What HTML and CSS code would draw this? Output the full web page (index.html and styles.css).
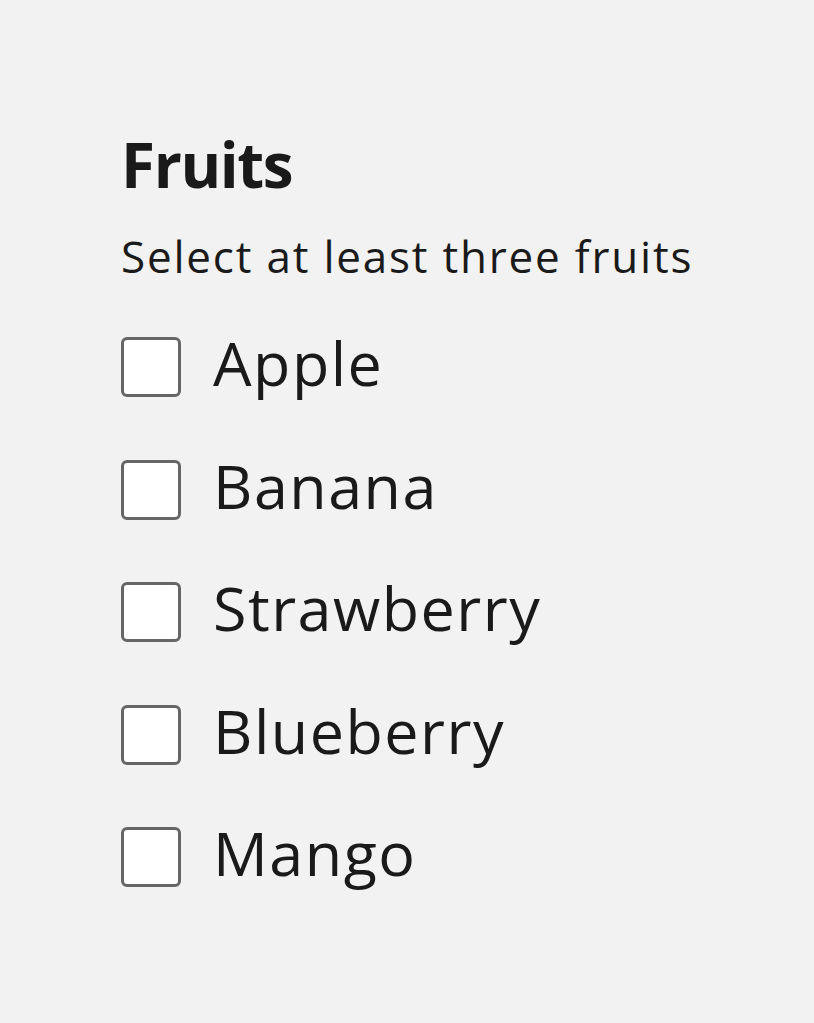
FILE: index.html
```html
<!DOCTYPE html>
<html lang="en">
<head>
    <meta charset="UTF-8">
    <meta name="viewport" content="width=device-width, initial-scale=1.0">
    <title>Fruits</title>
    <link rel="stylesheet" href="styles.css">
</head>
<body>
    <div class="group" role="group" aria-labelledby="fruits-title">
        <h2 class="title" id="fruits-title">Fruits</h2>
        <p class="hint">Select at least three fruits</p>
        <ul class="options">
            <li><label class="option"><input type="checkbox" class="box"><span>Apple</span></label></li>
            <li><label class="option"><input type="checkbox" class="box"><span>Banana</span></label></li>
            <li><label class="option"><input type="checkbox" class="box"><span>Strawberry</span></label></li>
            <li><label class="option"><input type="checkbox" class="box"><span>Blueberry</span></label></li>
            <li><label class="option"><input type="checkbox" class="box"><span>Mango</span></label></li>
        </ul>
    </div>
</body>
</html>
```

FILE: styles.css
```css
* {
    margin: 0;
    padding: 0;
    box-sizing: border-box;
}

body {
    background-color: #f2f2f2;
    color: #1a1a1a;
    font-family: "Open Sans", "Noto Sans", sans-serif;
}

.group {
    padding: 126px 0 0 121px;
}

.title {
    font-size: 62px;
    font-weight: 700;
    line-height: 76px;
    letter-spacing: -1.4px;
}

.hint {
    margin-top: 26px;
    font-size: 44px;
    line-height: 56px;
    letter-spacing: 1.8px;
}

.options {
    list-style: none;
    margin-top: 41px;
    display: flex;
    flex-direction: column;
    gap: 46.5px;
}

.option {
    display: flex;
    align-items: flex-start;
    gap: 32px;
    font-size: 61px;
    line-height: 76px;
    letter-spacing: 1.5px;
}

.box {
    appearance: none;
    margin-top: 12px;
    width: 60px;
    height: 60px;
    background-color: #fff;
    border: 3px solid #666;
    border-radius: 6px;
    flex-shrink: 0;
}
```
